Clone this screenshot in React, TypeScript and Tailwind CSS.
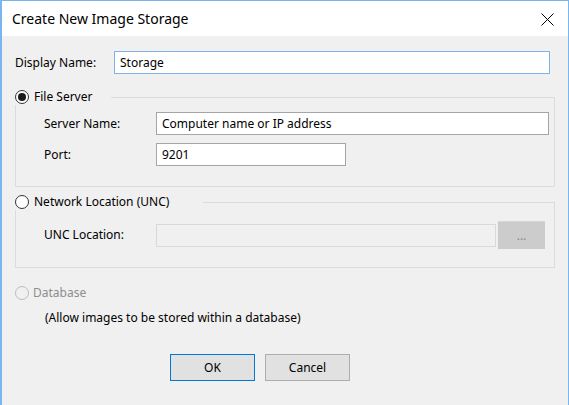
import React from 'react';

const Radio = ({ checked = false, disabled = false }: { checked?: boolean; disabled?: boolean }) => (
  <span
    className={
      'flex h-[14px] w-[14px] shrink-0 items-center justify-center rounded-full border ' +
      (disabled ? 'border-[#bcbcbc] bg-[#f0f0f0]' : 'border-[#333333] bg-white')
    }
  >
    {checked && <span className="h-[8px] w-[8px] rounded-full bg-[#1a1a1a]" />}
  </span>
);

const App: React.FC = () => {
  return (
    <div
      className="flex h-[405px] w-[569px] flex-col border-l-2 border-r border-t border-[#79b5f0] bg-[#f0f0f0] text-[12px] leading-4 text-black"
      style={{ fontFamily: '"Noto Sans", "Open Sans", sans-serif' }}
    >
      {/* title bar */}
      <div className="flex h-[35px] shrink-0 items-center justify-between bg-white pl-[10px] pr-[14px]">
        <span className="text-[14px]">Create New Image Storage</span>
        <svg width="13" height="13" viewBox="0 0 13 13" className="mt-[2px]">
          <path d="M0.5 0.5 L12.5 12.5 M12.5 0.5 L0.5 12.5" stroke="#000" strokeWidth="1" />
        </svg>
      </div>

      <div className="flex flex-col pl-[13px] pt-[15px]">
        {/* display name */}
        <div className="flex items-center">
          <span className="w-[99px]">Display Name:</span>
          <div className="flex h-[23px] w-[436px] items-center border border-[#7eb4ea] bg-white pl-[5px]">Storage</div>
        </div>

        {/* file server group */}
        <fieldset className="mt-[15px] w-[540px] border border-[#dcdcdc] pb-[20px] pl-[28px] pt-[7px]">
          <legend className="-ml-[29px] flex h-4 items-center gap-[5px] pr-[19px]">
            <Radio checked />
            <span>File Server</span>
          </legend>
          <div className="flex items-center">
            <span className="w-[112px]">Server Name:</span>
            <div className="flex h-[23px] w-[393px] items-center border border-[#a5a5a5] bg-white pl-[5px]">
              Computer name or IP address
            </div>
          </div>
          <div className="mt-[8px] flex items-center">
            <span className="w-[112px]">Port:</span>
            <div className="flex h-[23px] w-[190px] items-center border border-[#a5a5a5] bg-white pl-[5px]">9201</div>
          </div>
        </fieldset>

        {/* network location group */}
        <fieldset className="mt-[7px] w-[540px] border border-[#dcdcdc] pb-[18px] pl-[28px] pt-[11px]">
          <legend className="-ml-[29px] flex h-4 items-center gap-[5px] pr-[34px]">
            <Radio />
            <span>Network Location (UNC)</span>
          </legend>
          <div className="flex items-center">
            <span className="w-[112px]">UNC Location:</span>
            <div className="h-[23px] w-[340px] border border-[#d9d9d9] bg-[#f0f0f0]" />
            <div className="ml-[2px] flex h-[28px] w-[47px] items-center justify-center border-t border-[#d6d6d6] bg-[#cccccc] text-[#8a8a8a]">
              ...
            </div>
          </div>
        </fieldset>

        {/* database */}
        <div className="mt-[17px] flex h-4 items-center gap-[4px]">
          <Radio disabled />
          <span className="text-[#8d8d8d]">Database</span>
        </div>
        <div className="ml-[30px] mt-[9px]">(Allow images to be stored within a database)</div>

        {/* buttons */}
        <div className="ml-[155px] mt-[28px] flex gap-[10px]">
          <button className="h-[27px] w-[85px] border border-[#0078d7] bg-[#e1e1e1]">OK</button>
          <button className="h-[27px] w-[85px] border border-[#adadad] bg-[#e1e1e1]">Cancel</button>
        </div>
      </div>
    </div>
  );
};

export default App;
